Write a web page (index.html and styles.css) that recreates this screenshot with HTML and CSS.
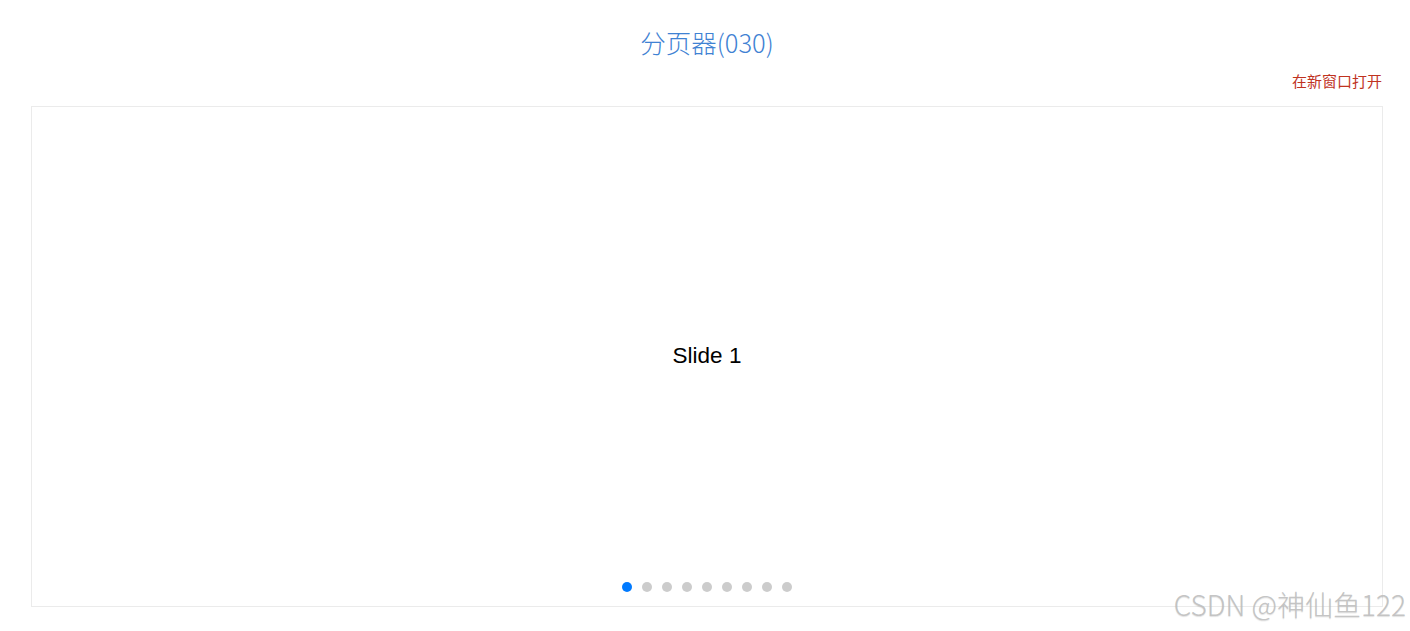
FILE: index.html
```html
<!DOCTYPE html>
<html lang="zh">
<head>
<meta charset="utf-8">
<title>分页器(030)</title>
<link rel="stylesheet" href="styles.css">
</head>
<body>
<div class="page">
  <h1 class="title">分页器(030)</h1>
  <div class="toolbar"><a class="open-link" href="#">在新窗口打开</a></div>
  <div class="swiper">
    <div class="slide">Slide 1</div>
    <div class="pagination">
      <span class="dot active"></span>
      <span class="dot"></span>
      <span class="dot"></span>
      <span class="dot"></span>
      <span class="dot"></span>
      <span class="dot"></span>
      <span class="dot"></span>
      <span class="dot"></span>
      <span class="dot"></span>
    </div>
  </div>
</div>
<div class="watermark">CSDN @神仙鱼122</div>
</body>
</html>
```

FILE: styles.css
```css
html, body {
  margin: 0;
  padding: 0;
  background: #fff;
}
body {
  font-family: "Noto Sans CJK SC", "Noto Sans", sans-serif;
  width: 1410px;
  height: 631px;
  overflow: hidden;
  position: relative;
}
.page {
  padding: 25px 27px 0 31px;
}
.title {
  margin: 0;
  font-size: 25.5px;
  line-height: 34px;
  font-weight: 300;
  color: #3f82d3;
  text-align: center;
}
.toolbar {
  margin-top: 12px;
  display: flex;
  justify-content: flex-end;
  height: 20px;
  padding-right: 1px;
}
.open-link {
  font-size: 15px;
  line-height: 20px;
  color: #c0331f;
  text-decoration: none;
}
.swiper {
  margin-top: 15px;
  height: 499px;
  border: 1px solid #ebebeb;
  position: relative;
  display: flex;
  align-items: center;
  justify-content: center;
}
.slide {
  font-family: "Liberation Sans", Arial, sans-serif;
  font-size: 22.5px;
  line-height: 26px;
  color: #000;
  margin-bottom: 2px;
}
.pagination {
  position: absolute;
  left: 0;
  right: 0;
  bottom: 14px;
  display: flex;
  justify-content: center;
  gap: 10px;
}
.dot {
  width: 10px;
  height: 10px;
  border-radius: 50%;
  background: #cccccc;
  display: block;
}
.dot.active {
  background: #007aff;
}
.watermark {
  position: absolute;
  right: 4px;
  bottom: 11px;
  font-family: "Noto Sans CJK SC", "Noto Sans", sans-serif;
  font-size: 28px;
  line-height: 32px;
  color: rgba(190, 190, 190, 0.9);
  text-shadow: 0 1px 1px rgba(0,0,0,0.12);
  font-weight: 300;
}
```
